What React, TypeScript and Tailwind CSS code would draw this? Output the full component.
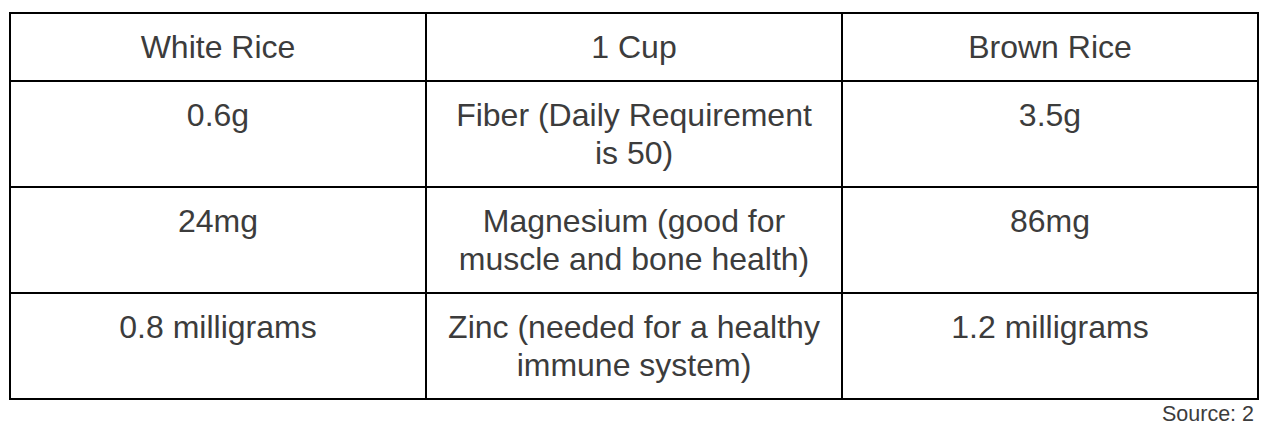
const rows = [
  ["White Rice", "1 Cup", "Brown Rice"],
  ["0.6g", "Fiber (Daily Requirement is 50)", "3.5g"],
  ["24mg", "Magnesium (good for muscle and bone health)", "86mg"],
  ["0.8 milligrams", "Zinc (needed for a healthy immune system)", "1.2 milligrams"],
];

export default function App() {
  return (
    <div
      className="w-[1280px] h-[443px] bg-white text-[#3c3c3c] pl-[9px] pt-[12px]"
      style={{ fontFamily: '"Liberation Sans", Arial, sans-serif' }}
    >
      <div className="w-[1248px]">
        <table className="w-full border-collapse table-fixed">
          <tbody>
            {rows.map((row, i) => (
              <tr key={i}>
                {row.map((cell, j) => (
                  <td
                    key={j}
                    className="w-[416px] border-2 border-black align-top text-center text-[32px] leading-[38px] px-[15px] pt-[14px] pb-[14px]"
                  >
                    {cell}
                  </td>
                ))}
              </tr>
            ))}
          </tbody>
        </table>
        <div className="text-right text-[21.5px] leading-[26px] pr-[3px] pt-[1px]">Source: 2</div>
      </div>
    </div>
  );
}
